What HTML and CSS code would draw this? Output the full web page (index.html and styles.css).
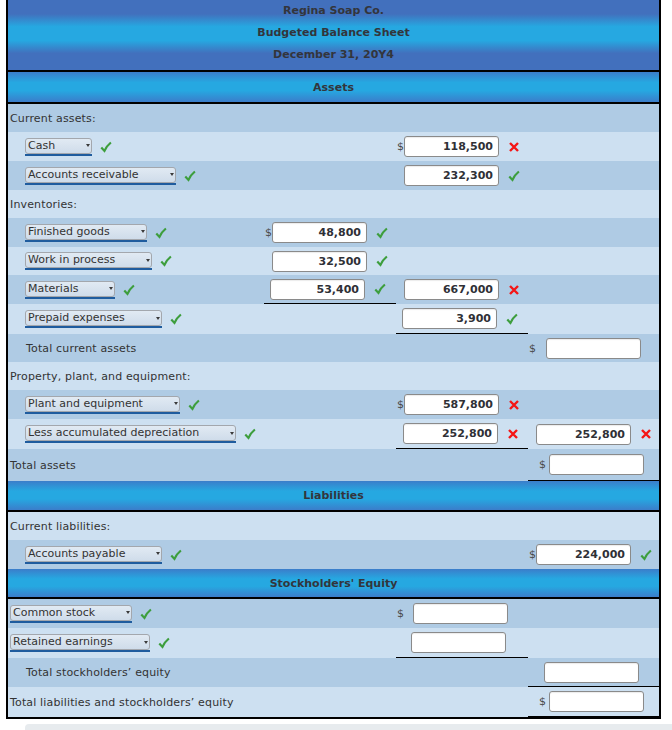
FILE: index.html
```html
<!DOCTYPE html>
<html>
<head>
<meta charset="utf-8">
<title>Regina Soap Co. - Budgeted Balance Sheet</title>
<link rel="stylesheet" href="styles.css">
</head>
<body>
<svg class="defs" width="0" height="0">
  <symbol id="ok" viewBox="0 0 12 12"><path d="M1.3 6.5 L4.4 9.9 C6 6.6 8 3.8 10.9 1.5" fill="none" stroke="#3d9e3d" stroke-width="2.2" stroke-linecap="butt" stroke-linejoin="miter"/></symbol>
  <symbol id="no" viewBox="0 0 12 12"><path d="M2 2 L10 10 M10 2 L2 10" fill="none" stroke="#f51515" stroke-width="2.4"/></symbol>
</svg>

<div class="sheet">
  <div class="title">
    <div>Regina Soap Co.</div>
    <div>Budgeted Balance Sheet</div>
    <div>December 31, 20Y4</div>
  </div>
  <div class="band band-assets">Assets</div>

  <div class="row dk h28"><div class="lab">Current assets:</div></div>

  <div class="row lt">
    <div class="lab ind"><span class="sel"><span class="box">Cash<i class="arr"></i></span></span><svg class="mk"><use href="#ok"/></svg></div>
    <div class="amt c2"><span class="cur">$</span><span class="inp">118,500</span><svg class="mk"><use href="#no"/></svg></div>
  </div>

  <div class="row dk">
    <div class="lab ind"><span class="sel"><span class="box">Accounts receivable<i class="arr"></i></span></span><svg class="mk"><use href="#ok"/></svg></div>
    <div class="amt c2"><span class="cur"></span><span class="inp">232,300</span><svg class="mk"><use href="#ok"/></svg></div>
  </div>

  <div class="row lt h28"><div class="lab">Inventories:</div></div>

  <div class="row dk">
    <div class="lab ind"><span class="sel"><span class="box">Finished goods<i class="arr"></i></span></span><svg class="mk"><use href="#ok"/></svg></div>
    <div class="amt c1"><span class="cur">$</span><span class="inp">48,800</span><svg class="mk"><use href="#ok"/></svg></div>
  </div>

  <div class="row lt h28">
    <div class="lab ind"><span class="sel"><span class="box">Work in process<i class="arr"></i></span></span><svg class="mk"><use href="#ok"/></svg></div>
    <div class="amt c1"><span class="cur"></span><span class="inp">32,500</span><svg class="mk"><use href="#ok"/></svg></div>
  </div>

  <div class="row dk">
    <div class="lab ind"><span class="sel"><span class="box">Materials<i class="arr"></i></span></span><svg class="mk"><use href="#ok"/></svg></div>
    <div class="amt c1 ul"><span class="cur w6"></span><span class="inp">53,400</span><svg class="mk"><use href="#ok"/></svg></div>
    <div class="amt c2"><span class="cur"></span><span class="inp">667,000</span><svg class="mk"><use href="#no"/></svg></div>
  </div>

  <div class="row lt h30">
    <div class="lab ind"><span class="sel"><span class="box">Prepaid expenses<i class="arr"></i></span></span><svg class="mk"><use href="#ok"/></svg></div>
    <div class="amt c2 ul"><span class="cur w6"></span><span class="inp">3,900</span><svg class="mk"><use href="#ok"/></svg></div>
  </div>

  <div class="row dk h28">
    <div class="lab ind-t">Total current assets</div>
    <div class="amt c3"><span class="cur w18">$</span><span class="inp"></span></div>
  </div>

  <div class="row lt h28"><div class="lab">Property, plant, and equipment:</div></div>

  <div class="row dk">
    <div class="lab ind"><span class="sel"><span class="box">Plant and equipment<i class="arr"></i></span></span><svg class="mk"><use href="#ok"/></svg></div>
    <div class="amt c2"><span class="cur">$</span><span class="inp">587,800</span><svg class="mk"><use href="#no"/></svg></div>
  </div>

  <div class="row lt h30">
    <div class="lab ind"><span class="sel"><span class="box">Less accumulated depreciation<i class="arr"></i></span></span><svg class="mk"><use href="#ok"/></svg></div>
    <div class="amt c2 ul"><span class="cur w7"></span><span class="inp">252,800</span><svg class="mk"><use href="#no"/></svg></div>
    <div class="amt c3"><span class="cur"></span><span class="inp">252,800</span><svg class="mk"><use href="#no"/></svg></div>
  </div>

  <div class="row dk h32">
    <div class="lab">Total assets</div>
    <div class="amt c3 ul"><span class="cur far">$</span><span class="inp"></span></div>
  </div>

  <div class="band band-sec">Liabilities</div>

  <div class="row lt h28"><div class="lab">Current liabilities:</div></div>

  <div class="row dk">
    <div class="lab ind"><span class="sel"><span class="box">Accounts payable<i class="arr"></i></span></span><svg class="mk"><use href="#ok"/></svg></div>
    <div class="amt c3"><span class="cur">$</span><span class="inp">224,000</span><svg class="mk"><use href="#ok"/></svg></div>
  </div>

  <div class="band band-sec band-short">Stockholders' Equity</div>

  <div class="row dk">
    <div class="lab"><span class="sel"><span class="box">Common stock<i class="arr"></i></span></span><svg class="mk"><use href="#ok"/></svg></div>
    <div class="amt c2"><span class="cur w17">$</span><span class="inp"></span></div>
  </div>

  <div class="row lt h30">
    <div class="lab"><span class="sel"><span class="box">Retained earnings<i class="arr"></i></span></span><svg class="mk"><use href="#ok"/></svg></div>
    <div class="amt c2 ul"><span class="cur w15"></span><span class="inp"></span></div>
  </div>

  <div class="row dk">
    <div class="lab ind-t">Total stockholders’ equity</div>
    <div class="amt c3 ul"><span class="cur w16"></span><span class="inp"></span></div>
  </div>

  <div class="row lt h30">
    <div class="lab">Total liabilities and stockholders’ equity</div>
    <div class="amt c3 ul"><span class="cur far">$</span><span class="inp"></span></div>
  </div>
</div>
<div class="foot"></div>
</body>
</html>
```

FILE: styles.css
```css
html, body {
  margin: 0;
  padding: 0;
  background: #ffffff;
}
body {
  font-family: "DejaVu Sans", Verdana, sans-serif;
  font-size: 11px;
  color: #333333;
  overflow: hidden;
}
.defs {
  position: absolute;
  width: 0;
  height: 0;
}
.sheet {
  margin-left: 6px;
  width: 655px;
  box-sizing: border-box;
  border-left: 2px solid #000;
  border-right: 2px solid #000;
  border-bottom: 2px solid #000;
}
.title {
  height: 70px;
  border-bottom: 2px solid #000;
  background: linear-gradient(#4270bd 0, #4270bd 20%, #26a8e1 38%, #26a8e1 58%, #4270bd 76%, #4270bd 100%);
  text-align: center;
  font-weight: bold;
  color: #33353c;
}
.title div {
  line-height: 22px;
}
.band {
  display: flex;
  align-items: center;
  justify-content: center;
  font-weight: bold;
  color: #33353c;
  background: linear-gradient(#3b7dca 0, #26a8e1 35%, #26a8e1 62%, #3b7dca 100%);
}
.band-assets {
  height: 30px;
  border-bottom: 2px solid #000;
}
.band-sec {
  height: 29px;
  border-bottom: 2px solid #000;
}
.band-short {
  height: 28px;
}
.row {
  display: grid;
  grid-template-columns: 256px 132px 132px 131px;
  height: 29px;
}
.row.h28 { height: 28px; }
.row.h30 { height: 30px; }
.row.h32 { height: 32px; }
.dk { background: #afcbe4; }
.lt { background: #cde0f1; }
.lab {
  grid-column: 1;
  display: flex;
  align-items: center;
  padding-left: 2px;
  white-space: nowrap;
  letter-spacing: 0.15px;
}
.lab.ind { padding-left: 17px; }
.lab.ind-t { padding-left: 18px; }
.sel {
  display: inline-flex;
  border-bottom: 2px solid #1f5c9e;
  letter-spacing: 0;
}
.box {
  display: inline-flex;
  align-items: center;
  height: 16px;
  box-sizing: border-box;
  padding: 0 1px 0 2px;
  border: 1px solid #a3a7ad;
  border-radius: 3px;
  background: linear-gradient(#e1eaf3, #cfdcea);
  color: #333;
  line-height: 14px;
}
.arr {
  margin-left: 31px;
  width: 0;
  height: 0;
  border-left: 2.5px solid transparent;
  border-right: 2.5px solid transparent;
  border-top: 3px solid #3a3a3a;
}
.lab .mk { margin-left: 8px; }
.mk {
  width: 12px;
  height: 12px;
  flex-shrink: 0;
}
.amt {
  display: flex;
  align-items: center;
  box-sizing: border-box;
}
.c1 { grid-column: 2; }
.c2 { grid-column: 3; }
.c3 { grid-column: 4; }
.ul { border-bottom: 1px solid #000; }
.cur {
  flex-shrink: 0;
  width: 8px;
  padding-left: 1px;
  box-sizing: border-box;
  color: #4a4a4a;
  font-size: 11px;
}
.cur.w6 { width: 6px; }
.cur.w7 { width: 7px; }
.cur.w15 { width: 15px; }
.cur.w16 { width: 16px; }
.cur.w17 { width: 17px; }
.cur.w18 { width: 18px; }
.cur.far { width: 21px; padding-left: 11px; }
.inp {
  flex-shrink: 0;
  display: block;
  width: 95px;
  height: 21px;
  box-sizing: border-box;
  border: 1px solid #8a8a8a;
  border-radius: 3px;
  background: #fff;
  box-shadow: inset 0 1px 1px rgba(0,0,0,0.08);
  font-weight: bold;
  color: #2f3036;
  text-align: right;
  padding-right: 5px;
  line-height: 19px;
}
.amt .mk { margin-left: 9px; }
.foot {
  margin-top: 5px;
  margin-left: 25px;
  height: 12px;
  background: #e7ebee;
  border-radius: 4px 0 0 0;
}
```
